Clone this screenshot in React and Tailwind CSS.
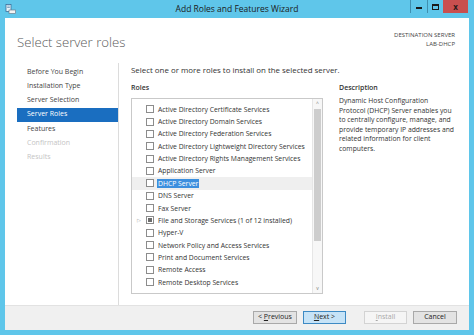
import { Fragment } from 'react'

const NAV = [
  { label: 'Before You Begin' },
  { label: 'Installation Type' },
  { label: 'Server Selection' },
  { label: 'Server Roles', active: true },
  { label: 'Features' },
  { label: 'Confirmation', disabled: true },
  { label: 'Results', disabled: true },
]

const ROLES = [
  'Active Directory Certificate Services',
  'Active Directory Domain Services',
  'Active Directory Federation Services',
  'Active Directory Lightweight Directory Services',
  'Active Directory Rights Management Services',
  'Application Server',
  'DHCP Server',
  'DNS Server',
  'Fax Server',
  'File and Storage Services (1 of 12 installed)',
  'Hyper-V',
  'Network Policy and Access Services',
  'Print and Document Services',
  'Remote Access',
  'Remote Desktop Services',
]

// Le texte de description est coupé à la main, comme dans l'assistant.
const DESC = [
  'Dynamic Host Configuration',
  'Protocol (DHCP) Server enables you',
  'to centrally configure, manage, and',
  'provide temporary IP addresses and',
  'related information for client',
  'computers.',
]

function WinIcon() {
  return (
    <svg width="11" height="10" viewBox="0 0 11 10">
      <rect x="1" y="0.5" width="5" height="7" fill="#e8f4fb" stroke="#3b6e9a" strokeWidth="0.8" />
      <line x1="2.2" y1="2" x2="4.8" y2="2" stroke="#3b6e9a" strokeWidth="0.6" />
      <line x1="2.2" y1="3.5" x2="4.8" y2="3.5" stroke="#3b6e9a" strokeWidth="0.6" />
      <rect x="4" y="6" width="6.5" height="3.5" fill="#f4f4f4" stroke="#6a7f90" strokeWidth="0.7" />
    </svg>
  )
}

function Checkbox({ partial }) {
  return (
    <span className="flex h-[8px] w-[8px] shrink-0 items-center justify-center border border-[#8c8c8c] bg-white">
      {partial && <span className="h-[4px] w-[4px] bg-[#6e6e6e]" />}
    </span>
  )
}

function Button({ children, primary, disabled }) {
  return (
    <div
      className={
        'flex h-[13px] items-center justify-center whitespace-pre border text-[7px] ' +
        (primary
          ? 'w-[43px] border-[#3d8ac4] bg-[#c6e3f7] text-[#222]'
          : disabled
            ? 'w-[43px] border-[#d3d3d3] bg-[#f5f5f5] text-[#a8a8a8]'
            : 'w-[44px] border-[#a9a9a9] bg-[#e3e3e3] text-[#222]')
      }
    >
      {children}
    </div>
  )
}

export default function App() {
  return (
    <div
      className="flex h-[335px] w-[474px] flex-col bg-[#5fc6ea] text-[#333]"
      style={{ fontFamily: '"Open Sans", "Noto Sans", sans-serif' }}
    >
      {/* barre de titre */}
      <div className="relative flex h-[18px] shrink-0 items-start">
        <div className="pl-[5px] pt-[4px]">
          <WinIcon />
        </div>
        <div className="absolute inset-x-0 top-[3px] text-center text-[8.5px] leading-[12px] text-[#1a1a1a]">
          Add Roles and Features Wizard
        </div>
        <div className="ml-auto mr-[6px] flex h-[13px]">
          <div className="flex w-[17px] items-end justify-center border-l border-[#3f8fb0] pb-[4px]">
            <span className="h-[2px] w-[6px] bg-[#1a1a1a]" />
          </div>
          <div className="flex w-[16px] items-center justify-center border-l border-[#3f8fb0]">
            <span className="h-[6px] w-[7px] border-[1.5px] border-t-[2px] border-[#1a1a1a]" />
          </div>
          <div className="flex w-[25px] items-center justify-center bg-[#c94f4f] text-[8px] font-bold leading-none text-[#2a1a1a]">
            x
          </div>
        </div>
      </div>

      <div className="mx-[5px] mb-[5px] flex flex-1 flex-col bg-white">
        {/* en-tête */}
        <div className="flex h-[45px] shrink-0 items-start justify-between pl-[12px] pr-[14px]">
          <div className="pt-[14px] text-[13.2px] font-light leading-[20px] text-[#5a5a5a]">Select server roles</div>
          <div className="pt-[13px] text-right text-[6px] leading-[9px] text-[#444]">
            <div>DESTINATION SERVER</div>
            <div>LAB-DHCP</div>
          </div>
        </div>

        <div className="flex flex-1">
          {/* navigation */}
          <div className="w-[114px] shrink-0 border-r border-[#dcdcdc] pl-[12px] pt-[2px]">
            {NAV.map((n) => (
              <div
                key={n.label}
                className={
                  'flex h-[14.2px] items-center pl-[10px] text-[7px] ' +
                  (n.active ? 'bg-[#1a6ec0] text-white' : n.disabled ? 'text-[#c4c4c4]' : 'text-[#444]')
                }
              >
                {n.label}
              </div>
            ))}
          </div>

          {/* rôles */}
          <div className="w-[204px] shrink-0 pl-[12px]">
            <div className="mt-[1px] h-[12px] whitespace-nowrap text-[7.9px] leading-[12px] text-[#333]">
              Select one or more roles to install on the selected server.
            </div>
            <div className="mt-[6px] h-[12px] text-[7px] font-semibold leading-[12px] text-[#333]">Roles</div>
            <div className="mt-[4px] flex h-[196px] border border-[#c9c9c9]">
              <div className="flex-1 pt-[4px]">
                {ROLES.map((r, i) => {
                  const dhcp = r === 'DHCP Server'
                  const file = i === 9
                  return (
                    <div
                      key={r}
                      className={'flex h-[12.36px] items-center ' + (dhcp ? 'bg-[#efefef]' : '')}
                    >
                      <span className="flex w-[14px] justify-center text-[5px] text-[#9a9a9a]">{file ? '▷' : ''}</span>
                      <Checkbox partial={file} />
                      <span
                        className={
                          'ml-[3px] whitespace-nowrap px-[1px] text-[6.8px] leading-[9px] ' +
                          (dhcp ? 'bg-[#3c8fde] text-white' : 'text-[#333]')
                        }
                      >
                        {r}
                      </span>
                    </div>
                  )
                })}
              </div>
              {/* barre de défilement */}
              <div className="flex w-[10px] flex-col border-l border-[#e6e6e6] bg-[#f7f7f7]">
                <div className="flex h-[9px] items-center justify-center text-[5px] leading-none text-[#777]">^</div>
                <div className="mx-[1px] mt-[1px] h-[132px] bg-[#cdcdcd]" />
                <div className="flex-1" />
                <div className="flex h-[9px] items-center justify-center text-[5px] leading-none text-[#777]">v</div>
              </div>
            </div>
          </div>

          {/* description */}
          <div className="pl-[16px]">
            <div className="mt-[19px] h-[12px] text-[7px] font-semibold leading-[12px] text-[#333]">Description</div>
            <div className="mt-[2px] text-[6.8px] leading-[9.6px] text-[#333]">
              {DESC.map((l, i) => (
                <Fragment key={i}>
                  {l}
                  <br />
                </Fragment>
              ))}
            </div>
          </div>
        </div>

        {/* pied */}
        <div className="flex h-[25px] shrink-0 items-start border-t border-[#e2e2e2] bg-[#f0f0f0] pr-[12px] pt-[5px]">
          <div className="ml-auto flex gap-[6px]">
            <Button>
              {'< '}
              <u>P</u>
              {'revious'}
            </Button>
            <Button primary>
              <u>N</u>
              {'ext >'}
            </Button>
          </div>
          <div className="ml-[18px] flex gap-[6px]">
            <Button disabled>
              <u>I</u>
              {'nstall'}
            </Button>
            <Button>Cancel</Button>
          </div>
        </div>
      </div>
    </div>
  )
}
